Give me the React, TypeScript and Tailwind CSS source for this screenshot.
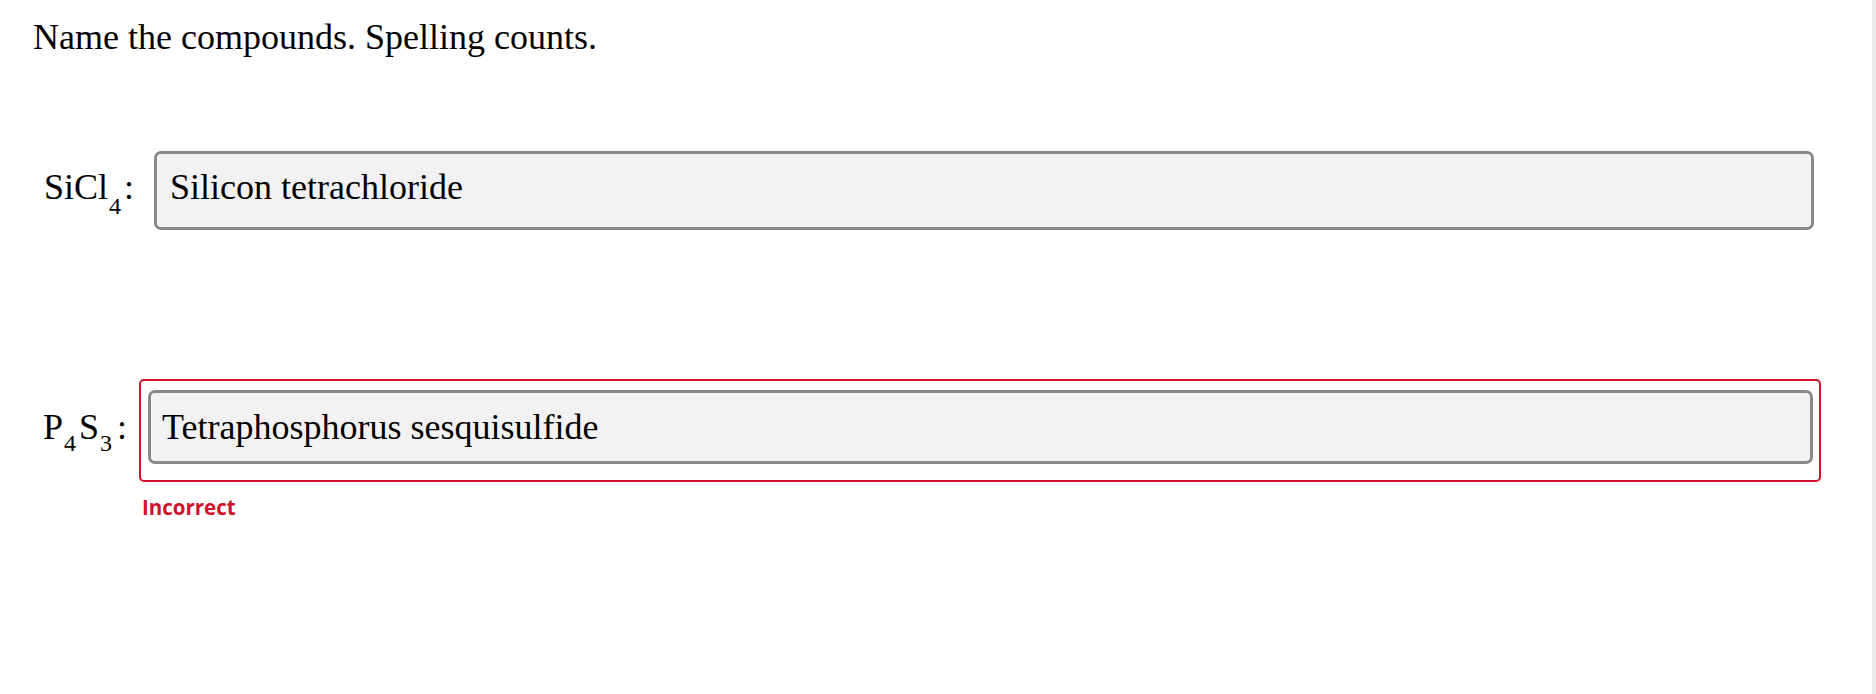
import React from "react";

const serif = { fontFamily: '"Liberation Serif", "Times New Roman", serif' };

export default function App() {
  return (
    <div className="flex min-h-[694px] w-full bg-white text-black" style={serif}>
      <main className="flex-1 pr-[51px]">
        <h1 className="pl-[33px] pt-[17px] text-[36px] leading-[40px] font-normal">
          Name the compounds. Spelling counts.
        </h1>

        <div className="mt-[94px] flex items-baseline pl-[44px]">
          <div className="w-[110px] shrink-0 text-[36px] leading-[40px] whitespace-nowrap">
            SiCl
            <span className="relative top-[15px] ml-[1px] text-[24px]">4</span>
            <span className="ml-[3px]">:</span>
          </div>
          <div className="mr-[7px] flex-1 rounded-[7px] border-[3px] border-[#898989] bg-[#f2f2f2] pt-[13px] pb-[20px] pl-[13px] text-[36px] leading-[40px]">
            Silicon tetrachloride
          </div>
        </div>

        <div className="mt-[149px] flex items-baseline pl-[43px]">
          <div className="w-[96px] shrink-0 text-[36px] leading-[40px] whitespace-nowrap">
            P<span className="relative top-[12px] ml-[1px] text-[24px]">4</span>
            <span className="ml-[3px]">S</span>
            <span className="relative top-[12px] ml-[1px] text-[24px]">3</span>
            <span className="ml-[5px]">:</span>
          </div>
          <div className="flex-1">
            <div className="rounded-[5px] border-2 border-[#d0112b] pt-[9px] pb-[16px] pl-[7px] pr-[6px]">
              <div className="rounded-[7px] border-[3px] border-[#898989] bg-[#f2f2f2] pt-[14px] pb-[14px] pl-[11px] text-[36px] leading-[40px]">
                Tetraphosphorus sesquisulfide
              </div>
            </div>
            <div
              className="mt-[11px] pl-[3px] text-[20.5px] leading-[28px] font-bold text-[#d0112b]"
              style={{ fontFamily: '"Open Sans", "Noto Sans", sans-serif' }}
            >
              Incorrect
            </div>
          </div>
        </div>
      </main>
      <aside className="w-[4px] shrink-0 bg-[#ebebeb]" />
    </div>
  );
}
